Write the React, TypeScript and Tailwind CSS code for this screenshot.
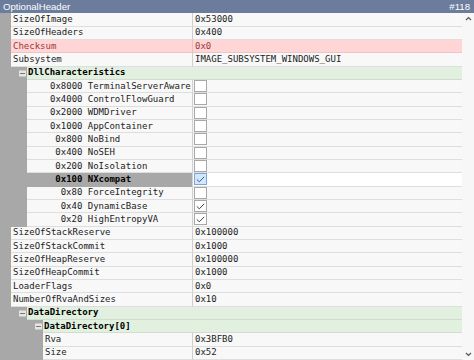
import React from 'react';

type Row =
  | { kind: 'field'; level: number; name: string; value: string; tone?: 'error' }
  | { kind: 'group'; level: number; name: string }
  | { kind: 'flag'; bit: string; name: string; checked: boolean; selected?: boolean };

const rows: Row[] = [
  { kind: 'field', level: 0, name: 'SizeOfImage', value: '0x53000' },
  { kind: 'field', level: 0, name: 'SizeOfHeaders', value: '0x400' },
  { kind: 'field', level: 0, name: 'Checksum', value: '0x0', tone: 'error' },
  { kind: 'field', level: 0, name: 'Subsystem', value: 'IMAGE_SUBSYSTEM_WINDOWS_GUI' },
  { kind: 'group', level: 0, name: 'DllCharacteristics' },
  { kind: 'flag', bit: '0x8000', name: 'TerminalServerAware', checked: false },
  { kind: 'flag', bit: '0x4000', name: 'ControlFlowGuard', checked: false },
  { kind: 'flag', bit: '0x2000', name: 'WDMDriver', checked: false },
  { kind: 'flag', bit: '0x1000', name: 'AppContainer', checked: false },
  { kind: 'flag', bit: '0x800', name: 'NoBind', checked: false },
  { kind: 'flag', bit: '0x400', name: 'NoSEH', checked: false },
  { kind: 'flag', bit: '0x200', name: 'NoIsolation', checked: false },
  { kind: 'flag', bit: '0x100', name: 'NXcompat', checked: true, selected: true },
  { kind: 'flag', bit: '0x80', name: 'ForceIntegrity', checked: false },
  { kind: 'flag', bit: '0x40', name: 'DynamicBase', checked: true },
  { kind: 'flag', bit: '0x20', name: 'HighEntropyVA', checked: true },
  { kind: 'field', level: 0, name: 'SizeOfStackReserve', value: '0x100000' },
  { kind: 'field', level: 0, name: 'SizeOfStackCommit', value: '0x1000' },
  { kind: 'field', level: 0, name: 'SizeOfHeapReserve', value: '0x100000' },
  { kind: 'field', level: 0, name: 'SizeOfHeapCommit', value: '0x1000' },
  { kind: 'field', level: 0, name: 'LoaderFlags', value: '0x0' },
  { kind: 'field', level: 0, name: 'NumberOfRvaAndSizes', value: '0x10' },
  { kind: 'group', level: 0, name: 'DataDirectory' },
  { kind: 'group', level: 1, name: 'DataDirectory[0]' },
  { kind: 'field', level: 2, name: 'Rva', value: '0x3BFB0' },
  { kind: 'field', level: 2, name: 'Size', value: '0x52' },
];

// gutter widths per nesting level
const gutter = ['w-[11px]', 'w-[27px]', 'w-[43px]'];
const groupGutter = ['w-[27px]', 'w-[43px]'];

const Collapse = () => (
  <span className="flex h-[7px] w-[7px] items-center justify-center border-y border-[#c8c8c8] bg-[#e6e6e6]">
    <span className="h-px w-[5px] bg-[#777]" />
  </span>
);

const Check = ({ on, selected }: { on: boolean; selected?: boolean }) => (
  <span
    className={`flex h-[12px] w-[13px] items-center justify-center border ${
      selected ? 'border-[#7aa7d6] bg-[#d4e7f8]' : 'border-[#a8a8a8] bg-white'
    }`}
  >
    {on && (
      <svg width="9" height="7" viewBox="0 0 9 7" fill="none">
        <path d="M0.8 3.4L3.3 5.8L8.2 0.8" stroke={selected ? '#2a62a8' : '#444'} strokeWidth="1" />
      </svg>
    )}
  </span>
);

const RowView = ({ row }: { row: Row }) => {
  if (row.kind === 'group') {
    return (
      <div className="flex h-[13.333px]">
        <div className={`flex shrink-0 items-center justify-end pr-[1px] bg-[#a8a8a8] ${groupGutter[row.level]}`}>
          <Collapse />
        </div>
        <div className="flex flex-1 items-center border-b border-[#d2dcd0] bg-[#e2f0df] pl-[1px] font-bold text-black">
          {row.name}
        </div>
      </div>
    );
  }

  if (row.kind === 'flag') {
    return (
      <div className="flex h-[13.333px]">
        <div className="flex w-[192px] shrink-0">
          <div className="w-[27px] shrink-0 bg-[#a8a8a8]" />
          <div
            className={`flex flex-1 items-center gap-[5.4px] pl-[23px] border-b whitespace-pre ${
              row.selected ? 'bg-[#a8a8a8] border-[#a8a8a8] font-bold text-black' : 'bg-[#f8f8f8] border-[#dedede] text-[#222]'
            }`}
          >
            <span className="w-[32.4px] text-right">{row.bit}</span>
            <span>{row.name}</span>
          </div>
        </div>
        <div className={`flex flex-1 items-center border-l border-b border-l-[#cfcfcf] border-b-[#dedede] pl-[1px] ${row.selected ? 'bg-white' : 'bg-[#f8f8f8]'}`}>
          <Check on={row.checked} selected={row.selected} />
        </div>
      </div>
    );
  }

  const err = row.tone === 'error';
  return (
    <div className="flex h-[13.333px]">
      <div className="flex w-[192px] shrink-0">
        <div className={`shrink-0 bg-[#a8a8a8] ${gutter[row.level]}`} />
        <div className={`flex flex-1 items-center border-b pl-[2px] ${err ? 'bg-[#ffd5d5] border-[#f0c4c4] text-[#9b3b3b]' : 'bg-[#f8f8f8] border-[#dedede] text-[#222]'}`}>
          {row.name}
        </div>
      </div>
      <div className={`flex flex-1 items-center border-l border-b pl-[2px] ${err ? 'bg-[#ffd5d5] border-l-[#e8c0c0] border-b-[#f0c4c4] text-[#9b3b3b]' : 'bg-[#f8f8f8] border-l-[#cfcfcf] border-b-[#dedede] text-[#222]'}`}>
        {row.value}
      </div>
    </div>
  );
};

export default function App() {
  return (
    <div className="flex h-[360px] w-[474px] flex-col overflow-hidden bg-white">
      {/* title bar */}
      <div className="flex h-[13.333px] shrink-0 items-center justify-between bg-[#6b7c9d] px-[3px] text-[9.6px] leading-none text-white font-['Liberation_Sans',sans-serif]">
        <span>OptionalHeader</span>
        <span className="pr-[1px]">#118</span>
      </div>

      <div className="flex flex-1">
        <div className="flex-1 text-[9px] leading-none font-['DejaVu_Sans_Mono',monospace]">
          {rows.map((r, i) => (
            <RowView key={i} row={r} />
          ))}
        </div>

        {/* scrollbar */}
        <div className="flex w-[12px] shrink-0 flex-col items-center justify-between bg-[#f7f7f7] py-[3px]">
          <svg width="7" height="5" viewBox="0 0 7 5" fill="none">
            <path d="M1 4L3.5 1.5L6 4" stroke="#555" strokeWidth="1.2" />
          </svg>
          <svg width="7" height="5" viewBox="0 0 7 5" fill="none">
            <path d="M1 1L3.5 3.5L6 1" stroke="#555" strokeWidth="1.2" />
          </svg>
        </div>
      </div>
    </div>
  );
}
